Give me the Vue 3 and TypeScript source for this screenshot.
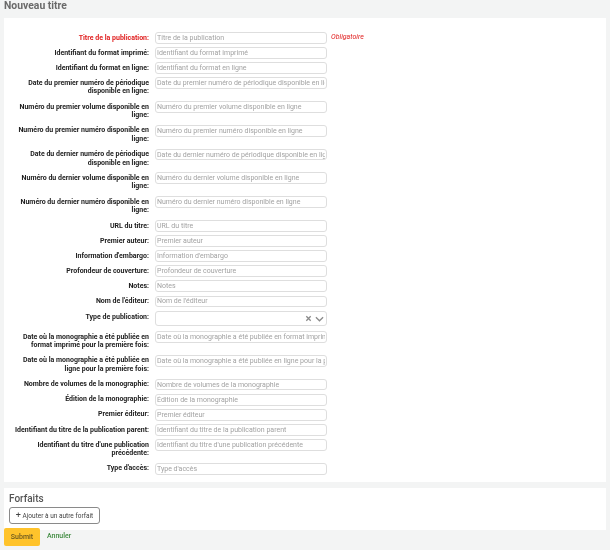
<script setup lang="ts">
interface Row { label: string; tall?: boolean; select?: boolean; required?: boolean }
const rows: Row[] = [
  { label: 'Titre de la publication:', required: true },
  { label: 'Identifiant du format imprimé:' },
  { label: 'Identifiant du format en ligne:' },
  { label: 'Date du premier numéro de périodique disponible en ligne:', tall: true },
  { label: 'Numéro du premier volume disponible en ligne:', tall: true },
  { label: 'Numéro du premier numéro disponible en ligne:', tall: true },
  { label: 'Date du dernier numéro de périodique disponible en ligne:', tall: true },
  { label: 'Numéro du dernier volume disponible en ligne:', tall: true },
  { label: 'Numéro du dernier numéro disponible en ligne:', tall: true },
  { label: 'URL du titre:' },
  { label: 'Premier auteur:' },
  { label: "Information d'embargo:" },
  { label: 'Profondeur de couverture:' },
  { label: 'Notes:' },
  { label: "Nom de l'éditeur:" },
  { label: 'Type de publication:', select: true },
  { label: 'Date où la monographie a été publiée en format imprimé pour la première fois:', tall: true },
  { label: 'Date où la monographie a été publiée en ligne pour la première fois:', tall: true },
  { label: 'Nombre de volumes de la monographie:' },
  { label: 'Édition de la monographie:' },
  { label: 'Premier éditeur:' },
  { label: 'Identifiant du titre de la publication parent:' },
  { label: "Identifiant du titre d'une publication précédente:", tall: true },
  { label: "Type d'accès:" },
]
const placeholder = (r: Row) => r.label.replace(/:$/, '')
</script>

<template>
  <div class="page">
    <h1 class="title">Nouveau titre</h1>
    <form class="card main" @submit.prevent>
      <div v-for="r in rows" :key="r.label" class="row" :class="{ tall: r.tall, sel: r.select }">
        <label class="lab" :class="{ req: r.required }">{{ r.label }}</label>
        <div v-if="r.select" class="select">
          <svg class="x" viewBox="0 0 8 8" width="7" height="7"><path d="M1.500 1.500l5 5M6.500 1.500l-5 5" stroke="#8a8a8a" stroke-width="1.500" fill="none"/></svg>
          <svg class="chev" viewBox="0 0 10 6" width="9" height="6"><path d="M1 1l4 4 4-4" stroke="#8a8a8a" stroke-width="1.400" fill="none"/></svg>
        </div>
        <input v-else class="inp" type="text" :placeholder="placeholder(r)" />
        <span v-if="r.required" class="oblig">Obligatoire</span>
      </div>
    </form>
    <section class="card pack">
      <h2 class="sub">Forfaits</h2>
      <button type="button" class="add"><span class="plus">+</span> Ajouter à un autre forfait</button>
    </section>
    <div class="actions">
      <button type="button" class="submit">Submit</button>
      <a class="cancel" href="#">Annuler</a>
    </div>
  </div>
</template>

<style>
html, body { margin: 0; background: #f3f4f4; }
</style>

<style scoped>
.page {
  width: 610px;
  height: 550px;
  overflow: hidden;
  background: #f3f4f4;
  font-family: Roboto, "Liberation Sans", sans-serif;
  font-size: 7px;
  color: #1f1f1f;
  filter: blur(0.3px);
}
.title {
  margin: 0;
  padding: 0 0 0 4px;
  height: 18px;
  line-height: 12px;
  font-size: 10.4px;
  font-weight: 700;
  color: #6a6a6a;
}
.card { background: #fff; margin: 0 4px; }
.main { padding: 14px 0 0; height: 450px; margin-bottom: 6px; }
.row { display: flex; align-items: flex-start; height: 15.100px; }
.row.tall { height: 23.800px; }
.row.sel { height: 20.500px; }
.lab {
  width: 136px;
  margin-left: 9px;
  flex: none;
  text-align: right;
  font-weight: 700;
  line-height: 8.500px;
  padding-top: 1.500px;
  color: #222;
}
.sel .lab { padding-top: 2.500px; }
.lab.req { color: #e02020; }
.inp, .select {
  margin-left: 6px;
  width: 172px;
  height: 11.700px;
  flex: none;
  box-sizing: border-box;
  border: 1px solid #dedede;
  border-radius: 3px;
  background: #fff;
  font: 7px Roboto, "Liberation Sans", sans-serif;
  padding: 0 1px;
  outline: none;
}
.inp::placeholder { color: #a2a2a2; opacity: 1; }
.select {
  height: 15px;
  margin-top: 0.500px;
  display: flex;
  align-items: center;
  justify-content: flex-end;
  gap: 3px;
  padding-right: 2px;
}
.oblig {
  margin-left: 4px;
  font-style: italic;
  color: #e02020;
  line-height: 11.700px;
}
.pack { height: 42px; padding: 4px 0 0 5px; box-sizing: border-box; }
.sub {
  margin: 0 0 2px;
  font-size: 10px;
  line-height: 13px;
  font-weight: 500;
  color: #555;
}
.add {
  display: block;
  width: 91px;
  height: 17px;
  padding: 0;
  border: 1px solid #8a8a8a;
  border-radius: 3px;
  background: #fff;
  font: 6.500px Roboto, "Liberation Sans", sans-serif;
  color: #444;
}
.plus { font-size: 9px; line-height: 7px; }
.actions { display: flex; align-items: center; gap: 7px; margin-top: -2px; padding-left: 4px; position: relative; }
.submit {
  width: 36px;
  height: 18px;
  border: none;
  border-radius: 2px;
  background: #ffc32b;
  color: #6b5820;
  font: 500 7px Roboto, "Liberation Sans", sans-serif;
  padding: 0;
}
.cancel { color: #3f8a3f; text-decoration: none; font-weight: 500; margin-top: -2px; }
</style>
